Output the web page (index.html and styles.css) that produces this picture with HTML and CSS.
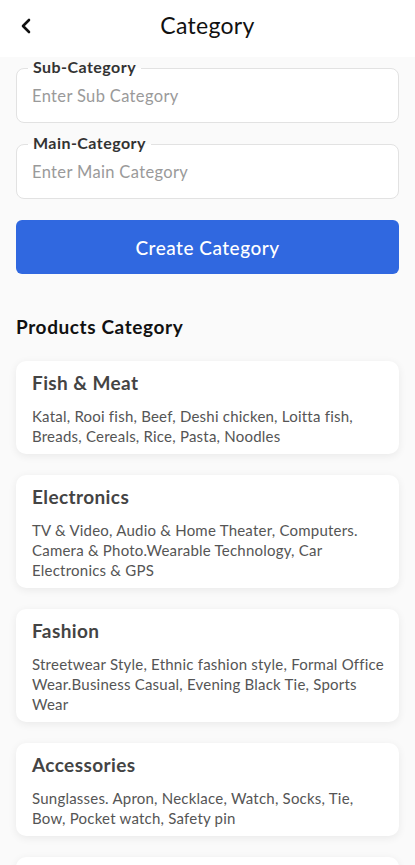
FILE: index.html
```html
<!DOCTYPE html>
<html>
<head>
<meta charset="utf-8">
<link rel="stylesheet" href="styles.css">
</head>
<body>
<header class="topbar">
  <button class="back" aria-label="Back">
    <svg width="14" height="16" viewBox="0 0 14 16"><path d="M10 2 L4 8 L10 14" fill="none" stroke="#111" stroke-width="2.6" stroke-linecap="round" stroke-linejoin="round"/></svg>
  </button>
  <h1 class="title">Category</h1>
</header>
<main class="content">
  <div class="field">
    <span class="field-label">Sub-Category</span>
    <span class="field-placeholder">Enter Sub Category</span>
  </div>
  <div class="field">
    <span class="field-label">Main-Category</span>
    <span class="field-placeholder">Enter Main Category</span>
  </div>
  <button class="create">Create Category</button>
  <h2 class="section-title">Products Category</h2>
  <div class="cards">
    <div class="card">
      <h3 class="card-title">Fish &amp; Meat</h3>
      <p class="card-text">Katal, Rooi fish, Beef, Deshi chicken, Loitta fish, Breads, Cereals, Rice, Pasta, Noodles</p>
    </div>
    <div class="card">
      <h3 class="card-title">Electronics</h3>
      <p class="card-text">TV &amp; Video, Audio &amp; Home Theater, Computers. Camera &amp; Photo.Wearable Technology, Car Electronics &amp; GPS</p>
    </div>
    <div class="card">
      <h3 class="card-title">Fashion</h3>
      <p class="card-text">Streetwear Style, Ethnic fashion style, Formal Office Wear.Business Casual, Evening Black Tie, Sports Wear</p>
    </div>
    <div class="card">
      <h3 class="card-title">Accessories</h3>
      <p class="card-text">Sunglasses. Apron, Necklace, Watch, Socks, Tie, Bow, Pocket watch, Safety pin</p>
    </div>
    <div class="card card-more"></div>
  </div>
</main>
</body>
</html>
```

FILE: styles.css
```css
* { box-sizing: border-box; }
html, body { margin: 0; padding: 0; }
body {
  background: #fafafa;
  font-family: "Lato", "Noto Sans", sans-serif;
  color: #222;
  width: 415px;
  height: 865px;
  overflow: hidden;
}
.topbar {
  background: #fff;
  height: 57px;
  display: flex;
  align-items: center;
  justify-content: center;
  position: relative;
}
.back {
  position: absolute;
  left: 19px;
  top: 17px;
  background: none;
  border: 0;
  padding: 0;
  width: 20px;
  height: 18px;
  display: flex;
  align-items: center;
}
.title {
  margin: 0;
  font-family: "Lato", sans-serif;
  font-weight: 400;
  font-size: 23px;
  color: #111;
  letter-spacing: 0.3px;
  padding-bottom: 7px;
}
.content {
  padding: 11px 16px 0;
  display: flex;
  flex-direction: column;
}
.field {
  position: relative;
  height: 55px;
  border: 1px solid #e2e2e2;
  border-radius: 8px;
  background: #fff;
  display: flex;
  align-items: center;
  padding: 0 15px;
  margin-bottom: 21px;
}
.field-label {
  position: absolute;
  left: 11px;
  top: -12px;
  padding: 0 5px;
  background: linear-gradient(#fafafa 55%, #fff 55%);
  font-size: 16px;
  font-weight: 700;
  color: #333;
  line-height: 20px;
  letter-spacing: 0.45px;
}
.field-placeholder {
  font-size: 16.5px;
  color: #9a9a9a;
  padding-top: 1px;
  letter-spacing: 0.35px;
}
.create {
  height: 54px;
  border: 0;
  border-radius: 6px;
  background: #3068e0;
  color: #fff;
  font-family: "Lato", sans-serif;
  font-size: 19px;
  font-weight: 500;
  letter-spacing: 0.5px;
  margin: 0;
}
.section-title {
  margin: 42px 0 0;
  font-size: 19px;
  font-weight: 700;
  line-height: 22px;
  color: #111;
  letter-spacing: 0.6px;
}
.cards {
  margin-top: 23px;
  display: flex;
  flex-direction: column;
  gap: 21px;
}
.card {
  background: #fff;
  border-radius: 10px;
  box-shadow: 0 2px 8px rgba(0, 0, 0, 0.07);
  padding: 10px 8px 8px 16px;
}
.card-more {
  height: 60px;
}
.card-title {
  margin: 0;
  font-size: 19px;
  font-weight: 700;
  line-height: 24px;
  color: #444;
  letter-spacing: 0.4px;
}
.card-text {
  margin: 11px 0 0;
  font-size: 15px;
  line-height: 20px;
  color: #555;
  letter-spacing: 0.22px;
}
```
